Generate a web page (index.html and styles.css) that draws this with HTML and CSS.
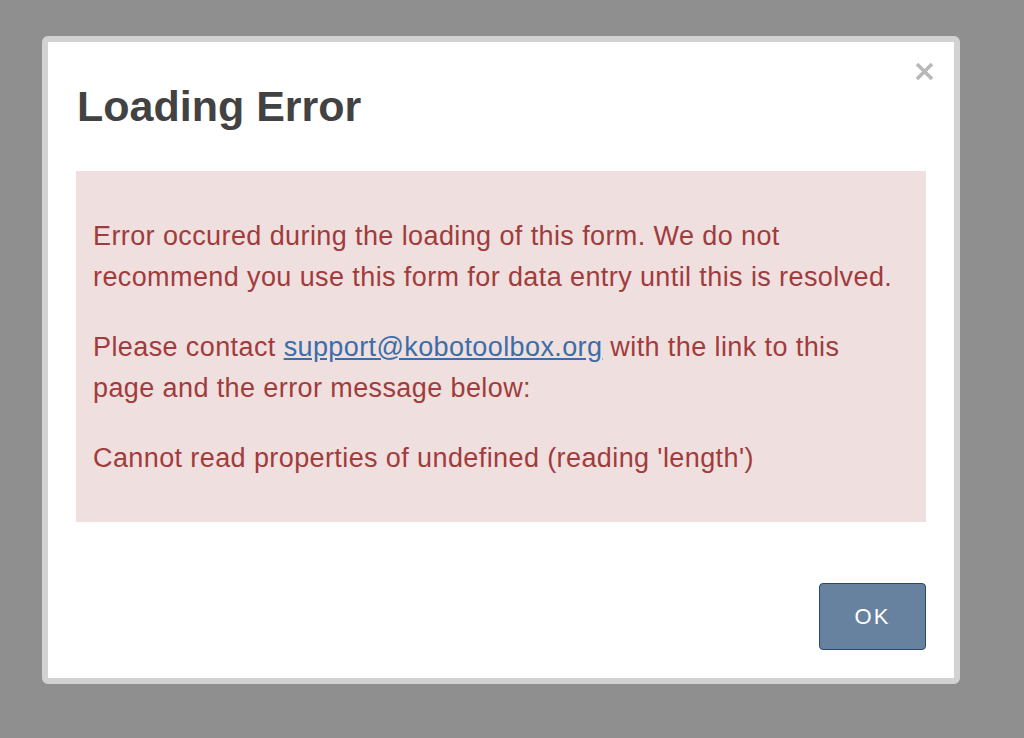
FILE: index.html
```html
<!DOCTYPE html>
<html lang="en">
<head>
  <meta charset="UTF-8">
  <title>Loading Error</title>
  <link rel="stylesheet" href="styles.css">
</head>
<body>

  <div class="modal">
    <button class="modal-close" type="button" aria-label="Close">
      <svg width="19" height="19" viewBox="0 0 19 19">
        <path d="M2 2L17 17M17 2L2 17" stroke="currentColor" stroke-width="3.6" stroke-linecap="butt"/>
      </svg>
    </button>
    <h1 class="modal-title">Loading Error</h1>

    <div class="alert">
      <p>Error occured during the loading of this form. We do not recommend you use this form for data entry until this is resolved.</p>
      <p>Please contact <a href="mailto:support@kobotoolbox.org">support@kobotoolbox.org</a> with the link to this page and the error message below:</p>
      <p>Cannot read properties of undefined (reading 'length')</p>
    </div>

    <div class="modal-footer">
      <button class="btn-ok" type="button">OK</button>
    </div>
  </div>

</body>
</html>
```

FILE: styles.css
```css
body {
  margin: 0;
  padding: 36px 0 0 42px;
  background: #8f8f8f;
  font-family: "Liberation Sans", Arial, Helvetica, sans-serif;
}
.modal {
  position: relative;
  box-sizing: border-box;
  width: 918px;
  height: 648px;
  padding: 41px 28px 28px 28px;
  background: #fff;
  border: 6px solid #d2d2d2;
  border-radius: 6px;
  display: flex;
  flex-direction: column;
}
.modal-close {
  position: absolute;
  top: 20px;
  right: 20px;
  padding: 0;
  border: 0;
  background: none;
  color: #b8b8b8;
  line-height: 0;
  cursor: pointer;
}
.modal-title {
  margin: 0 0 41px 1px;
  font-size: 43px;
  line-height: 47px;
  font-weight: bold;
  color: #424242;
}
.alert {
  padding: 45px 30px 43px 17px;
  background: #f0dfdf;
  color: #a03c3c;
  font-size: 27px;
  letter-spacing: 0.4px;
  line-height: 41px;
}
.alert p {
  margin: 0 0 29px;
}
.alert p:last-child {
  margin-bottom: 0;
}
.alert a {
  color: #3b6ea8;
  text-decoration: underline;
}
.modal-footer {
  margin-top: auto;
  display: flex;
  justify-content: flex-end;
}
.btn-ok {
  width: 107px;
  height: 67px;
  background: #67829f;
  border: 1px solid #284870;
  border-radius: 4px;
  color: #fff;
  font-family: "Liberation Sans", Arial, sans-serif;
  font-size: 22px;
  letter-spacing: 2px;
  cursor: pointer;
}
```
